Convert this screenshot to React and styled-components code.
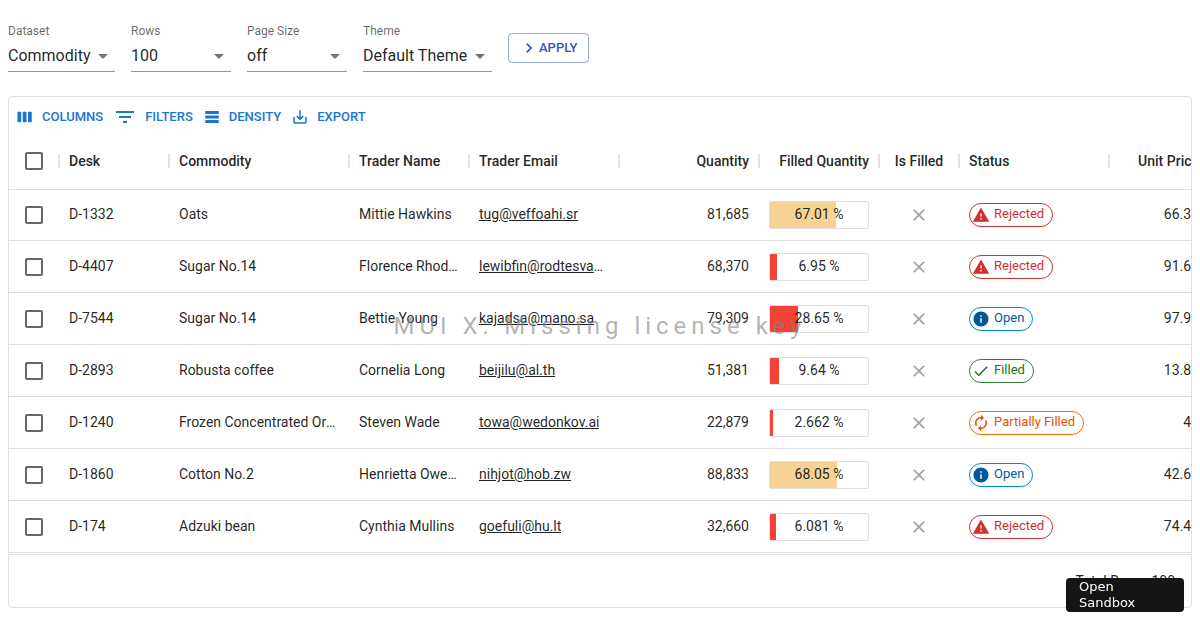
import React from "react";
import styled, { createGlobalStyle } from "styled-components";

const icons = {
  arrowDown: "M7 10l5 5 5-5z",
  arrowRight: "M8.59 16.59L13.17 12 8.59 7.41 10 6l6 6-6 6z",
  columns:
    "M6 5H3c-.55 0-1 .45-1 1v12c0 .55.45 1 1 1h3c.55 0 1-.45 1-1V6c0-.55-.45-1-1-1zm14 0h-3c-.55 0-1 .45-1 1v12c0 .55.45 1 1 1h3c.55 0 1-.45 1-1V6c0-.55-.45-1-1-1zm-7 0h-3c-.55 0-1 .45-1 1v12c0 .55.45 1 1 1h3c.55 0 1-.45 1-1V6c0-.55-.45-1-1-1z",
  filters: "M10 18h4v-2h-4v2zM3 6v2h18V6H3zm3 7h12v-2H6v2z",
  density: "M21,8H3V4h18V8z M21,10H3v4h18V10z M21,16H3v4h18V16z",
  export:
    "M19 12v7H5v-7H3v7c0 1.1.9 2 2 2h14c1.1 0 2-.9 2-2v-7h-2zm-6 .67l2.59-2.58L17 11.5l-5 5-5-5 1.41-1.41L11 12.67V3h2z",
  close:
    "M19 6.41L17.59 5 12 10.59 6.41 5 5 6.41 10.59 12 5 17.59 6.41 19 12 13.41 17.59 19 19 17.59 13.41 12z",
  Rejected: "M1 21h22L12 2 1 21zm12-3h-2v-2h2v2zm0-4h-2v-4h2v4z",
  Open: "M12 2C6.48 2 2 6.48 2 12s4.48 10 10 10 10-4.48 10-10S17.52 2 12 2zm1 15h-2v-6h2v6zm0-8h-2V7h2v2z",
  Filled: "M9 16.2L4.8 12l-1.4 1.4L9 19 21 7l-1.4-1.4L9 16.2z",
  "Partially Filled":
    "M12 6v3l4-4-4-4v3c-4.42 0-8 3.58-8 8 0 1.57.46 3.03 1.24 4.26L6.7 14.8c-.45-.83-.7-1.79-.7-2.8 0-3.31 2.69-6 6-6zm6.76 1.74L17.3 9.2c.44.84.7 1.79.7 2.8 0 3.31-2.69 6-6 6v-3l-4 4 4 4v-3c4.42 0 8-3.58 8-8 0-1.57-.46-3.03-1.24-4.26z",
};

const statusColors = {
  Rejected: { color: "#d32f2f", border: "#d32f2f" },
  Open: { color: "#01579b", border: "#0288d1" },
  Filled: { color: "#256f2a", border: "#2e7d32" },
  "Partially Filled": { color: "#e65100", border: "#ef6c00" },
};

const settings = [
  { id: "dataset", label: "Dataset", options: ["Commodity", "Employee"] },
  { id: "rows", label: "Rows", options: ["100", "1,000"] },
  { id: "pageSize", label: "Page Size", options: ["off", "25", "100"] },
  { id: "theme", label: "Theme", options: ["Default Theme", "Ant Design"] },
];

const toolbar = [
  { label: "Columns", icon: "columns", size: 18 },
  { label: "Filters", icon: "filters", size: 24 },
  { label: "Density", icon: "density", size: 18 },
  { label: "Export", icon: "export", size: 18 },
];

const columns = [
  { label: "Desk" },
  { label: "Commodity" },
  { label: "Trader Name" },
  { label: "Trader Email" },
  { label: "Quantity", align: "right" },
  { label: "Filled Quantity", align: "right" },
  { label: "Is Filled", align: "center" },
  { label: "Status" },
  { label: "Unit Price", align: "right" },
];

const rows = [
  { desk: "D-1332", commodity: "Oats", name: "Mittie Hawkins", email: "tug@veffoahi.sr", quantity: "81,685", filled: 67.01, status: "Rejected", price: "66.31" },
  { desk: "D-4407", commodity: "Sugar No.14", name: "Florence Rhodes", email: "lewibfin@rodtesvama.com", quantity: "68,370", filled: 6.95, status: "Rejected", price: "91.62" },
  { desk: "D-7544", commodity: "Sugar No.14", name: "Bettie Young", email: "kajadsa@mano.sa", quantity: "79,309", filled: 28.65, status: "Open", price: "97.94" },
  { desk: "D-2893", commodity: "Robusta coffee", name: "Cornelia Long", email: "beijilu@al.th", quantity: "51,381", filled: 9.64, status: "Filled", price: "13.85" },
  { desk: "D-1240", commodity: "Frozen Concentrated Orange Juice", name: "Steven Wade", email: "towa@wedonkov.ai", quantity: "22,879", filled: 2.662, status: "Partially Filled", price: "41" },
  { desk: "D-1860", commodity: "Cotton No.2", name: "Henrietta Owens", email: "nihjot@hob.zw", quantity: "88,833", filled: 68.05, status: "Open", price: "42.63" },
  { desk: "D-174", commodity: "Adzuki bean", name: "Cynthia Mullins", email: "goefuli@hu.lt", quantity: "32,660", filled: 6.081, status: "Rejected", price: "74.42" },
];

const Icon = ({ name, size }) => (
  <svg
    width={size}
    height={size}
    viewBox="0 0 24 24"
    fill="currentColor"
    aria-hidden="true"
  >
    <path d={icons[name]} />
  </svg>
);

const Setting = ({ id, label, options }) => (
  <StyledField>
    <label htmlFor={id}>{label}</label>
    <div className="select">
      <select id={id} defaultValue={options[0]}>
        {options.map((option) => (
          <option key={option}>{option}</option>
        ))}
      </select>
      <Icon name="arrowDown" size={24} />
    </div>
  </StyledField>
);

const Row = ({ row }) => (
  <GridRow>
    <Cell $align="center">
      <Checkbox type="checkbox" aria-label={`Select ${row.desk}`} />
    </Cell>
    <Cell>
      <CellText>{row.desk}</CellText>
    </Cell>
    <Cell>
      <CellText>{row.commodity}</CellText>
    </Cell>
    <Cell>
      <CellText>{row.name}</CellText>
    </Cell>
    <Cell>
      <CellText>
        <a href={`mailto:${row.email}`}>{row.email}</a>
      </CellText>
    </Cell>
    <Cell $align="right">
      <CellText>{row.quantity}</CellText>
    </Cell>
    <Cell>
      <Progress>
        <ProgressBar $low={row.filled < 30} style={{ width: `${row.filled}%` }} />
        <ProgressValue>{row.filled} %</ProgressValue>
      </Progress>
    </Cell>
    <Cell $align="center">
      <NotFilled role="img" aria-label="no">
        <Icon name="close" size={20} />
      </NotFilled>
    </Cell>
    <Cell>
      <Chip $colors={statusColors[row.status]}>
        <Icon name={row.status} size={18} />
        <span>{row.status}</span>
      </Chip>
    </Cell>
    <Cell $align="right">
      <CellText>{row.price}</CellText>
    </Cell>
  </GridRow>
);

const App = () => {
  return (
    <>
      <GlobalStyle />
      <Page>
        <Settings onSubmit={(e) => e.preventDefault()}>
          {settings.map((setting) => (
            <Setting key={setting.id} {...setting} />
          ))}
          <ApplyButton type="submit">
            <Icon name="arrowRight" size={20} />
            <span>Apply</span>
          </ApplyButton>
        </Settings>

        <DataGrid>
          <Main>
            <Toolbar>
              {toolbar.map(({ label, icon, size }) => (
                <ToolbarButton key={label} type="button">
                  <Icon name={icon} size={size} />
                  <span>{label}</span>
                </ToolbarButton>
              ))}
            </Toolbar>
            <Table>
              <thead>
                <GridRow $head>
                  <HeaderCell $align="center">
                    <Checkbox type="checkbox" aria-label="Select all rows" />
                  </HeaderCell>
                  {columns.map(({ label, align }) => (
                    <HeaderCell key={label} $align={align}>
                      {label}
                    </HeaderCell>
                  ))}
                </GridRow>
              </thead>
              <tbody>
                {rows.map((row) => (
                  <Row key={row.desk} row={row} />
                ))}
              </tbody>
            </Table>
            <Watermark>MUI X: Missing license key</Watermark>
          </Main>
          <Footer>Total Rows: 100</Footer>
        </DataGrid>
      </Page>
      <SandboxButton type="button">Open Sandbox</SandboxButton>
    </>
  );
};

const GlobalStyle = createGlobalStyle`
  *,
  *::before,
  *::after {
    box-sizing: border-box;
  }
  body {
    margin: 0;
    background: #fff;
    color: rgba(0, 0, 0, 0.87);
    font-family: Roboto, "Liberation Sans", sans-serif;
    font-size: 14px;
  }
  button,
  select {
    font-family: inherit;
  }
  svg {
    display: block;
    flex-shrink: 0;
  }
`;

const justify = { left: "flex-start", center: "center", right: "flex-end" };

const Page = styled.main`
  display: flex;
  flex-direction: column;
  gap: 24px;
  min-height: 100vh;
  padding: 24px 8px 22px;
`;

const Settings = styled.form`
  display: flex;
  align-items: center;
  gap: 16px;
`;

const StyledField = styled.div`
  display: flex;
  flex-direction: column;
  gap: 2px;
  min-width: 100px;
  label {
    color: rgba(0, 0, 0, 0.6);
    font-size: 12px;
    line-height: 14px;
  }
  .select {
    position: relative;
    border-bottom: 1px solid rgba(0, 0, 0, 0.42);
  }
  select {
    display: block;
    width: 100%;
    height: 31px;
    padding: 0 24px 0 0;
    appearance: none;
    background: transparent;
    border: none;
    color: inherit;
    font-size: 16px;
  }
  svg {
    position: absolute;
    top: 4px;
    right: 0;
    color: rgba(0, 0, 0, 0.54);
    pointer-events: none;
  }
`;

const ApplyButton = styled.button`
  display: flex;
  align-items: center;
  height: 30px;
  padding: 0 10px;
  background: transparent;
  border: 1px solid rgba(56, 83, 190, 0.5);
  border-radius: 4px;
  color: #3853b5;
  font-size: 13px;
  font-weight: 500;
  text-transform: uppercase;
  cursor: pointer;
  span {
    padding-bottom: 1px;
  }
`;

const DataGrid = styled.section`
  display: flex;
  flex: 1;
  flex-direction: column;
  border: 1px solid #e0e0e0;
  border-radius: 4px;
`;

const Main = styled.div`
  position: relative;
  flex: 1;
  overflow: hidden;
`;

const Toolbar = styled.div`
  display: flex;
  gap: 2px;
  padding: 4px 4px 0;
`;

const ToolbarButton = styled.button`
  display: flex;
  align-items: center;
  gap: 8px;
  height: 32px;
  padding: 0 5px 0 3px;
  background: transparent;
  border: none;
  color: #1976d2;
  font-size: 13px;
  font-weight: 500;
  text-transform: uppercase;
  cursor: pointer;
  span {
    padding-bottom: 1px;
  }
`;

const Table = styled.table`
  display: block;
  thead,
  tbody {
    display: block;
  }
  tbody {
    box-shadow: inset 0 1px #e0e0e0;
  }
`;

const GridRow = styled.tr`
  display: grid;
  grid-template-columns: 50px 110px 180px 120px 150px 140px 120px 80px 150px 100px;
  height: ${({ $head }) => ($head ? "56px" : "52px")};
  border-bottom: ${({ $head }) => ($head ? "none" : "1px solid #e0e0e0")};
`;

const Cell = styled.td`
  display: flex;
  align-items: center;
  justify-content: ${({ $align = "left" }) => justify[$align]};
  min-width: 0;
  padding: 1px 10px 0;
`;

const CellText = styled.span`
  overflow: hidden;
  padding-bottom: 2px;
  line-height: 20px;
  text-overflow: ellipsis;
  white-space: nowrap;
  a {
    color: inherit;
  }
`;

const HeaderCell = styled.th`
  position: relative;
  display: flex;
  align-items: center;
  justify-content: ${({ $align = "left" }) => justify[$align]};
  padding: 0 10px;
  font-weight: 500;
  white-space: nowrap;
  &::after {
    content: "";
    position: absolute;
    top: 21px;
    right: -1px;
    width: 2px;
    height: 14px;
    background: #e0e0e0;
  }
`;

const Checkbox = styled.input`
  flex-shrink: 0;
  width: 18px;
  height: 18px;
  margin: 0;
  appearance: none;
  border: 2px solid rgba(0, 0, 0, 0.6);
  border-radius: 2px;
  cursor: pointer;
  &:checked {
    background: #1976d2;
    border-color: #1976d2;
  }
`;

const Progress = styled.div`
  display: grid;
  width: 100%;
  height: 28px;
  overflow: hidden;
  border: 1px solid #e0e0e0;
  border-radius: 2px;
`;

const ProgressBar = styled.div`
  grid-area: 1 / 1;
  background: ${({ $low }) => ($low ? "#f44336" : "#f6d394")};
`;

const ProgressValue = styled.div`
  grid-area: 1 / 1;
  line-height: 25px;
  text-align: center;
`;

const NotFilled = styled.span`
  color: rgba(0, 0, 0, 0.38);
`;

const Chip = styled.span`
  display: flex;
  align-items: center;
  gap: 4px;
  height: 24px;
  padding: 0 8px 0 2px;
  border: 1px solid ${({ $colors }) => $colors.border};
  border-radius: 12px;
  color: ${({ $colors }) => $colors.color};
  font-size: 13px;
  white-space: nowrap;
  span {
    padding-bottom: 3px;
  }
`;

const Watermark = styled.div`
  position: absolute;
  inset: 0;
  display: flex;
  align-items: center;
  justify-content: center;
  color: rgba(130, 130, 130, 0.62);
  font-size: 24px;
  letter-spacing: 5px;
  pointer-events: none;
`;

const Footer = styled.footer`
  display: flex;
  align-items: center;
  justify-content: flex-end;
  height: 53px;
  padding: 0 16px;
  border-top: 1px solid #e0e0e0;
`;

const SandboxButton = styled.button`
  position: fixed;
  right: 16px;
  bottom: 18px;
  width: 118px;
  padding: 1px 32px 1px 13px;
  background: #151515;
  border: none;
  border-radius: 4px;
  color: #fff;
  && {
    font-family: "DejaVu Sans", sans-serif;
  }
  font-size: 13px;
  line-height: 16px;
  text-align: left;
  cursor: pointer;
`;

export default App;
